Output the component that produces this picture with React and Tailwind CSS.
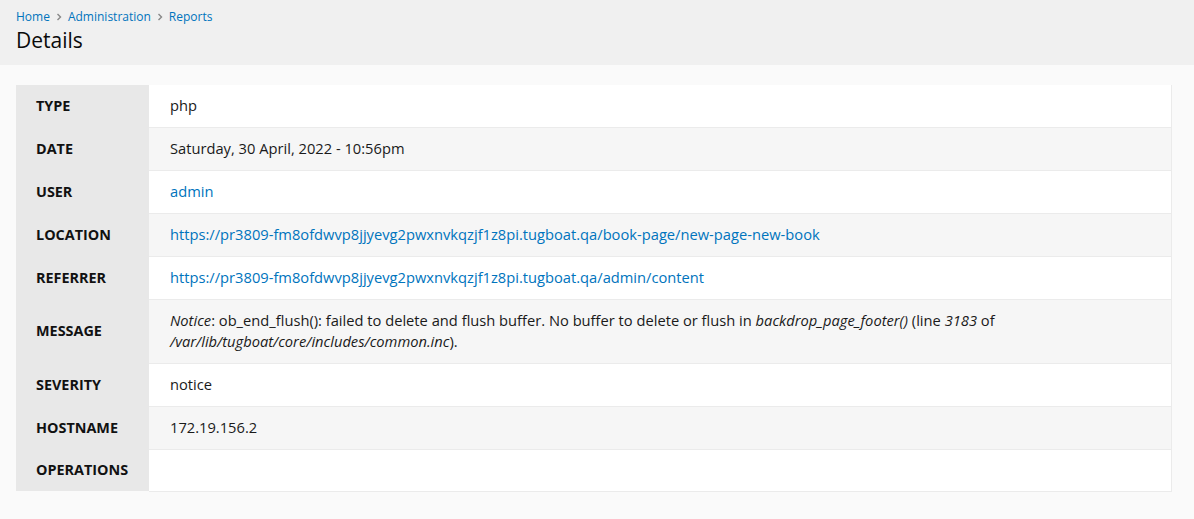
import React from 'react'

const rows = [
  { label: 'Type', value: 'php' },
  { label: 'Date', value: 'Saturday, 30 April, 2022 - 10:56pm' },
  { label: 'User', value: 'admin', link: true },
  { label: 'Location', value: 'https://pr3809-fm8ofdwvp8jjyevg2pwxnvkqzjf1z8pi.tugboat.qa/book-page/new-page-new-book', link: true },
  { label: 'Referrer', value: 'https://pr3809-fm8ofdwvp8jjyevg2pwxnvkqzjf1z8pi.tugboat.qa/admin/content', link: true },
  { label: 'Message', message: true },
  { label: 'Severity', value: 'notice' },
  { label: 'Hostname', value: '172.19.156.2' },
  { label: 'Operations', value: '' },
]

const Chevron = () => (
  <svg className="mx-[6px] w-[6px] h-[8px]" viewBox="0 0 6 8" fill="none">
    <path d="M1.5 1l3 3-3 3" stroke="#888" strokeWidth="1.4" />
  </svg>
)

const App = () => {
  return (
    <div className="min-h-[519px] bg-[#fafafa] text-[#1a1a1a]" style={{ fontFamily: '"Open Sans", "Noto Sans", sans-serif' }}>
      {/* Page header */}
      <div className="bg-[#f0f0f0] h-[65px] px-4 pt-[7px]">
        <div className="flex items-center text-[12px] leading-[20px] text-[#0074bd]">
          <a>Home</a>
          <Chevron />
          <a>Administration</a>
          <Chevron />
          <a>Reports</a>
        </div>
        <h1 className="text-[21px] leading-[26px] font-normal text-[#0a0a0a]">Details</h1>
      </div>

      {/* Details table */}
      <div className="pl-4 pr-[22px] pt-5">
        <table className="w-full border-collapse text-[14.7px] leading-[21px]">
          <tbody>
            {rows.map((row, index) => (
              <tr key={index} className={index % 2 === 1 ? 'bg-[#f6f6f6]' : 'bg-white'}>
                <th className="w-[133px] bg-[#e8e8e8] text-left text-[14.4px] font-bold uppercase pl-5 pr-2 pt-[9.7px] pb-[11.3px] text-[#111]">
                  {row.label}
                </th>
                <td className="pl-[21px] pr-4 pt-[9.7px] pb-[11.3px] border-b border-r border-[#ebebeb]">
                  {row.message ? (
                    <span>
                      <em>Notice</em>: ob_end_flush(): failed to delete and flush buffer. No buffer to delete or flush in <em>backdrop_page_footer()</em> (line <em>3183</em> of <em>/var/lib/tugboat/core/includes/common.inc</em>).
                    </span>
                  ) : row.link ? (
                    <a className="text-[#0074bd]">{row.value}</a>
                  ) : (
                    row.value
                  )}
                </td>
              </tr>
            ))}
          </tbody>
        </table>
      </div>
    </div>
  )
}

export default App
